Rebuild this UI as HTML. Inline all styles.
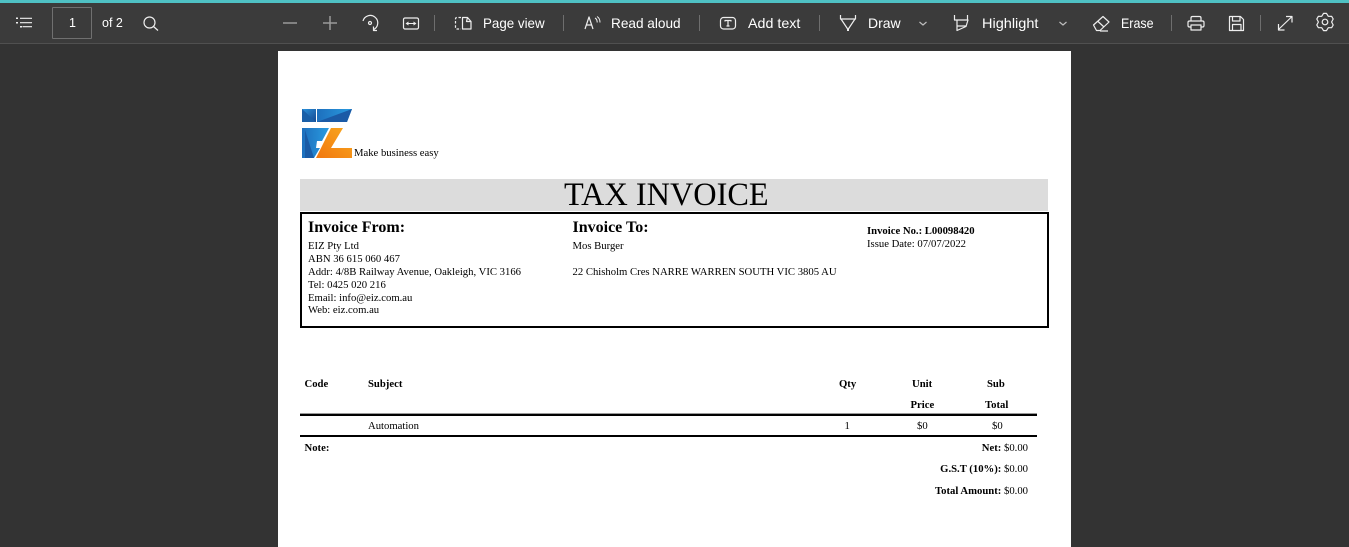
<!DOCTYPE html>
<html><head><meta charset="utf-8"><style>
html,body{margin:0;padding:0;width:1349px;height:547px;overflow:hidden;background:#333;}
.a{position:absolute;white-space:nowrap;}
.t{position:absolute;white-space:nowrap;font:14px/20px "Liberation Sans",sans-serif;color:#fff;top:13px;transform-origin:left center;}
.s{position:absolute;width:1px;height:16px;top:15px;background:#6e6e6e;}
.p{position:absolute;white-space:nowrap;font-family:"Liberation Serif",serif;font-size:10.68px;line-height:13px;color:#000;}
.b{font-weight:bold;}
.l{position:absolute;background:#000;}
svg{position:absolute;left:0;top:0;}
</style></head><body>
<div class="a" style="left:0;top:0;width:1349px;height:3px;background:#4fc1c4"></div>
<div class="a" style="left:0;top:3px;width:1349px;height:40px;background:#3b3b3b"></div>
<div class="a" style="left:0;top:43px;width:1349px;height:1px;background:#505050"></div>
<div class="a" style="left:52px;top:7px;width:38px;height:30px;border:1px solid #707070;border-radius:1px"></div>
<div class="t" style="left:69px;font-size:12.5px">1</div>
<div class="t" style="left:102px;font-size:12.5px">of 2</div>
<div class="t" style="left:483px;transform:scaleX(.954)">Page view</div>
<div class="t" style="left:611px;transform:scaleX(.972)">Read aloud</div>
<div class="t" style="left:748px;transform:scaleX(1.02)">Add text</div>
<div class="t" style="left:868px">Draw</div>
<div class="t" style="left:982px;transform:scaleX(1.036)">Highlight</div>
<div class="t" style="left:1121px;transform:scaleX(.89)">Erase</div>
<div class="s" style="left:434px"></div><div class="s" style="left:563px"></div><div class="s" style="left:699px"></div><div class="s" style="left:819px"></div><div class="s" style="left:1171px"></div><div class="s" style="left:1260px"></div>
<svg width="1349" height="44" fill="none" stroke="#eeeeee" stroke-width="1.2" stroke-linejoin="round">
<path d="M20 18.300H32M20 22.700H32M22.500 26.700H32"/><path d="M16 18.300h2M16 22.700h2M20 26.700h2" stroke-width="1.500"/>
<circle cx="149.500" cy="22.500" r="5.500"/><path d="M153.500 26.500l4.500 4"/>
<path d="M283 23H297M323 23H337M330 16V30" stroke="#9a9a9a" stroke-width="1.500"/>
<path d="M363 21a7.500 7.500 0 1 1 10.500 8.700M373.500 26.500v4h3.500"/><circle cx="370" cy="23" r="1.500"/>
<rect x="403.500" y="18" width="15" height="11" rx="1.500"/><path d="M405.500 23.500l3-2v4zM416.500 23.500l-3-2v4z" fill="#eeeeee" stroke="none"/><path d="M408 23.500h6" stroke-width="1"/>
<path d="M462.500 17.500h5l3.500 4v7.500h-8.500zM467.500 17.500l-1 4h4.500"/><path d="M461 17.500h-4q-1.500 0-1.500 1.500v8.500q0 1.500 1.500 1.500h4" stroke-dasharray="2.500 1.700"/>
<path d="M585 29l4-12 4 12M586.300 25h5.500"/><path d="M595 18c1.500.8 2.200 2.500 2.200 4.500M597 16.500c2 1.200 3 3.500 3 6" stroke-width="1"/>
<rect x="720.500" y="17.500" width="15" height="11.500" rx="3"/><path d="M725 21.500v-1h6v1M728 20.500v5.500M726.500 26h3"/>
<path d="M840.500 15v4h15v-4M841 19l7 10.500 7-10.500"/><path d="M848 29v2" stroke-width="2"/>
<path d="M919.500 22l3.500 3 3.500-3M1059.500 22l3.500 3 3.500-3" stroke="#bdbdbd"/>
<path d="M954.500 15v5M967.500 15v5M954 20h14l-2 6.500-9 4v-10M957 26h9"/>
<path d="M1093.500 25l9.500-8.500 6 5.500-9 8.500h-3.500zM1097.500 21l6.500 6M1100 31h8"/>
<path d="M1191 21v-3q0-1.500 1.500-1.500h7q1.500 0 1.500 1.500v3M1191 27h-1.500q-1.500 0-1.500-1.500v-3q0-1.500 1.500-1.500h13q1.500 0 1.500 1.500v3q0 1.500-1.500 1.500h-1.500M1191 25h10v5h-10z"/>
<path d="M1229.500 16.500h11l3 3v11h-14zM1232.500 16.500v4.500h7.500v-4.500M1232.500 30.500v-6h8.500v6"/>
<path d="M1278.500 29.500l13.500-13M1286 16.500h6v6M1278.500 24v6h6"/>
<path d="M1323.500 13.400H1326.500L1328.300 16.300 1331.700 16.400 1333.200 19 1331.600 22 1333.200 25 1331.700 27.600 1328.300 27.700 1326.500 30.600H1323.500L1321.700 27.700 1318.300 27.600 1316.800 25 1318.400 22 1316.800 19 1318.300 16.400 1321.700 16.300Z"/><circle cx="1325" cy="22" r="2.800"/>
</svg>
<div class="a" style="left:278px;top:51px;width:793px;height:496px;background:#fff"></div>
<svg style="left:302px;top:109px" width="52" height="52">
<defs><linearGradient id="g1" x1="0" y1="0" x2="1" y2="1"><stop offset="0" stop-color="#2a92dc"/><stop offset="1" stop-color="#17478f"/></linearGradient><linearGradient id="g3" x1="0" y1="0" x2="1" y2="0"><stop offset="0" stop-color="#1d6fbd"/><stop offset="1" stop-color="#2a9be0"/></linearGradient><linearGradient id="g2" x1="0" y1="1" x2="1" y2="0"><stop offset="0" stop-color="#f1770f"/><stop offset="1" stop-color="#f9a91f"/></linearGradient></defs>
<path d="M0 0h14v13H0z" fill="url(#g1)"/><path d="M0 0l14 13H0z" fill="#1a5fa8"/>
<path d="M15 0h35l-5 13H15z" fill="url(#g3)"/><path d="M15 13l35-13-5 13z" fill="#1b5aa6"/>
<path d="M0 19H27L20 32H15L14 39H18L12 49H0Z" fill="url(#g3)"/><path d="M3 21l9 28H3z" fill="#1a5ba6"/>
<path d="M29 19H41L29 39H50V49H14L22 33Z" fill="url(#g2)"/>
</svg>
<div class="p" style="left:354px;top:147px">Make business easy</div>
<div class="a" style="left:300px;top:179px;width:748px;height:32px;background:#dcdcdc"></div>
<div class="a" style="left:564px;top:176px;font:32.3px/36px 'Liberation Serif',serif;color:#000">TAX INVOICE</div>
<div class="a" style="left:300px;top:212px;width:745px;height:112px;border:2px solid #000"></div>
<div class="p b" style="left:308px;top:219px;font-size:16px;line-height:18px">Invoice From:</div>
<div class="p b" style="left:572.500px;top:219px;font-size:16px;line-height:18px">Invoice To:</div>
<div class="p" style="left:308px;top:240px">EIZ Pty Ltd</div>
<div class="p" style="left:308px;top:253px">ABN 36 615 060 467</div>
<div class="p" style="left:308px;top:266px">Addr: 4/8B Railway Avenue, Oakleigh, VIC 3166</div>
<div class="p" style="left:308px;top:279px">Tel: 0425 020 216</div>
<div class="p" style="left:308px;top:292px">Email: info@eiz.com.au</div>
<div class="p" style="left:308px;top:304px">Web: eiz.com.au</div>
<div class="p" style="left:572.500px;top:240px">Mos Burger</div>
<div class="p" style="left:572.500px;top:266px">22 Chisholm Cres NARRE WARREN SOUTH VIC 3805 AU</div>
<div class="p b" style="left:867px;top:225px">Invoice No.: L00098420</div>
<div class="p" style="left:867px;top:238px">Issue Date: 07/07/2022</div>
<div class="p b" style="left:304.500px;top:378px">Code</div>
<div class="p b" style="left:368px;top:378px">Subject</div>
<div class="p b" style="left:839px;top:378px">Qty</div>
<div class="p b" style="left:912px;top:378px">Unit</div>
<div class="p b" style="left:987px;top:378px">Sub</div>
<div class="p b" style="left:910.500px;top:399px">Price</div>
<div class="p b" style="left:985px;top:399px">Total</div>
<div class="l" style="left:300px;top:413px;width:737px;height:1px;background:#999"></div>
<div class="l" style="left:300px;top:414px;width:737px;height:2px"></div>
<div class="p" style="left:368px;top:420px">Automation</div>
<div class="p" style="left:844.500px;top:420px">1</div>
<div class="p" style="left:917px;top:420px">$0</div>
<div class="p" style="left:992px;top:420px">$0</div>
<div class="l" style="left:300px;top:435px;width:737px;height:2px"></div>
<div class="p b" style="left:304.500px;top:442px">Note:</div>
<div class="p" style="right:321px;top:442px"><span class="b">Net:</span> $0.00</div>
<div class="p" style="right:321px;top:463px"><span class="b">G.S.T (10%):</span> $0.00</div>
<div class="p" style="right:321px;top:485px"><span class="b">Total Amount:</span> $0.00</div>
</body></html>
